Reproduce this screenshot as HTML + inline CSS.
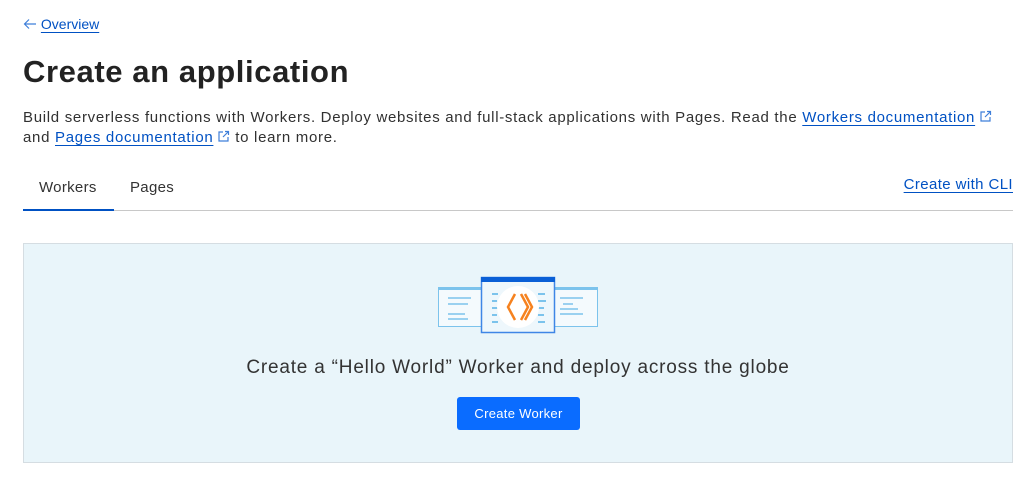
<!DOCTYPE html>
<html><head><style>
body{margin:0;background:#fff;font-family:"Liberation Sans","NanumGothic",sans-serif;color:#313131;width:1031px;height:482px;overflow:hidden;position:relative}
a{color:#0051c3;text-decoration:underline;text-underline-offset:3px}
.abs{position:absolute}
.ext{display:inline-block;vertical-align:-1px;margin-left:4px}
</style></head><body>
<div class="abs" style="left:23px;top:16px;font-size:14px;color:#0051c3"><svg width="14" height="12" viewBox="0 0 14 12" style="vertical-align:-1px"><path d="M13 6H2M6 1.5L1.5 6L6 10.5" fill="none" stroke="#3f7fd9" stroke-width="1.2"/></svg> <a href="#">Overview</a></div>
<div class="abs" style="left:23px;top:54px;font-size:31px;font-weight:bold;color:#222;letter-spacing:0.6px">Create an application</div>
<div class="abs" style="left:23px;top:108px;font-size:15px;line-height:20px;width:1000px;letter-spacing:0.7px">Build serverless functions with Workers. Deploy websites and full-stack applications with Pages. Read the <a href="#">Workers documentation</a><svg class="ext" width="13" height="13" viewBox="0 0 13 13"><path d="M6 2H2V11H11V7M8 1.5H11.5V5M11.5 1.5L6 7" fill="none" stroke="#3f7fd9" stroke-width="1.2"/></svg><br>and <a href="#">Pages documentation</a><svg class="ext" width="13" height="13" viewBox="0 0 13 13"><path d="M6 2H2V11H11V7M8 1.5H11.5V5M11.5 1.5L6 7" fill="none" stroke="#3f7fd9" stroke-width="1.2"/></svg> to learn more.</div>
<div class="abs" style="left:39px;top:179px;font-size:15px;color:#333;letter-spacing:0.3px">Workers</div>
<div class="abs" style="left:130px;top:179px;font-size:15px;color:#333;letter-spacing:0.3px">Pages</div>
<div class="abs" style="right:18px;top:176px;font-size:15px;letter-spacing:0.4px"><a href="#">Create with CLI</a></div>
<div class="abs" style="left:23px;top:210px;width:990px;height:1px;background:#c8c8c8"></div>
<div class="abs" style="left:23px;top:209px;width:91px;height:2px;background:#0051c3"></div>
<div class="abs" style="left:23px;top:243px;width:988px;height:218px;background:#e9f5fa;border:1px solid #d5dde2"></div>
<svg class="abs" style="left:438px;top:276px" width="160" height="58" viewBox="0 0 160 58">
<rect x="0.5" y="11.5" width="48" height="39" fill="#f4fafd" stroke="#7cc3ec"/><rect x="0" y="11" width="49" height="3" fill="#7cc3ec"/>
<rect x="111.5" y="11.5" width="48" height="39" fill="#f4fafd" stroke="#7cc3ec"/><rect x="111" y="11" width="49" height="3" fill="#7cc3ec"/>
<g stroke="#7cc3ec" stroke-width="1.5"><line x1="10" y1="22" x2="33" y2="22"/><line x1="10" y1="28" x2="30" y2="28"/><line x1="10" y1="38" x2="27" y2="38"/><line x1="10" y1="43" x2="30" y2="43"/><line x1="122" y1="22" x2="145" y2="22"/><line x1="125" y1="28" x2="135" y2="28"/><line x1="122" y1="33" x2="140" y2="33"/><line x1="122" y1="38" x2="145" y2="38"/></g>
<rect x="43.5" y="1.5" width="73" height="55" fill="#eef7fc" stroke="#3f86e6" stroke-width="1.5"/><rect x="43" y="1" width="74" height="5" fill="#0a5fd6"/>
<g stroke="#7cc3ec" stroke-width="2"><line x1="54" y1="18" x2="60" y2="18"/><line x1="54" y1="25" x2="59" y2="25"/><line x1="54" y1="32" x2="60" y2="32"/><line x1="54" y1="39" x2="59" y2="39"/><line x1="54" y1="46" x2="60" y2="46"/><line x1="100" y1="18" x2="107" y2="18"/><line x1="100" y1="25" x2="108" y2="25"/><line x1="100" y1="32" x2="106" y2="32"/><line x1="100" y1="39" x2="106" y2="39"/><line x1="100" y1="46" x2="107" y2="46"/></g>
<circle cx="80" cy="31" r="21" fill="#fff"/>
<g fill="none" stroke="#f6821f" stroke-width="2.5"><path d="M77 18 L70 31 L77 44"/><path d="M83 18 L90 31 L83 44"/><path d="M87 18 L94 31 L87 44"/></g>
</svg>
<div class="abs" style="left:0;width:1036px;text-align:center;top:357px;font-size:19px;color:#333;letter-spacing:0.8px">Create a “Hello World” Worker and deploy across the globe</div>
<div class="abs" style="left:457px;top:397px;width:123px;height:33px;background:#0a6cff;border-radius:3px;color:#fff;font-size:13px;line-height:33px;text-align:center;letter-spacing:0.3px">Create Worker</div>
</body></html>
